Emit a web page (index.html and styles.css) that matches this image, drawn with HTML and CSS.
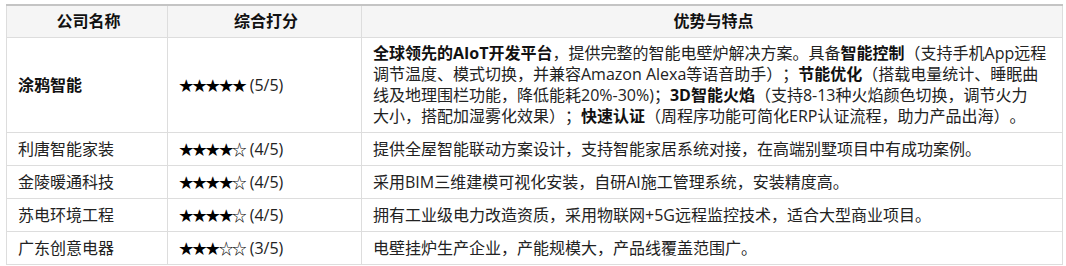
FILE: index.html
```html
<!DOCTYPE html>
<html lang="zh-CN">
<head>
<meta charset="utf-8">
<title>公司对比</title>
<link rel="stylesheet" href="styles.css">
</head>
<body>
<table class="cmp">
  <colgroup>
    <col class="c-name">
    <col class="c-score">
    <col class="c-desc">
  </colgroup>
  <thead>
    <tr><th>公司名称</th><th>综合打分</th><th>优势与特点</th></tr>
  </thead>
  <tbody>
    <tr>
      <td><strong>涂鸦智能</strong></td>
      <td><span class="stars">★★★★★</span> (5/5)</td>
      <td><strong>全球领先的AIoT开发平台</strong>，提供完整的智能电壁炉解决方案。具备<strong>智能控制</strong>（支持手机App远程调节温度、模式切换，并兼容Amazon Alexa等语音助手）；<strong>节能优化</strong>（搭载电量统计、睡眠曲线及地理围栏功能，降低能耗20%-30%)；<strong>3D智能火焰</strong>（支持8-13种火焰颜色切换，调节火力<br>大小，搭配加湿雾化效果）；<strong>快速认证</strong>（周程序功能可简化ERP认证流程，助力产品出海）。</td>
    </tr>
    <tr>
      <td>利唐智能家装</td>
      <td><span class="stars">★★★★☆</span> (4/5)</td>
      <td>提供全屋智能联动方案设计，支持智能家居系统对接，在高端别墅项目中有成功案例。</td>
    </tr>
    <tr>
      <td>金陵暖通科技</td>
      <td><span class="stars">★★★★☆</span> (4/5)</td>
      <td>采用BIM三维建模可视化安装，自研AI施工管理系统，安装精度高。</td>
    </tr>
    <tr>
      <td>苏电环境工程</td>
      <td><span class="stars">★★★★☆</span> (4/5)</td>
      <td>拥有工业级电力改造资质，采用物联网+5G远程监控技术，适合大型商业项目。</td>
    </tr>
    <tr>
      <td>广东创意电器</td>
      <td><span class="stars">★★★☆☆</span> (3/5)</td>
      <td>电壁挂炉生产企业，产能规模大，产品线覆盖范围广。</td>
    </tr>
  </tbody>
</table>
</body>
</html>
```
FILE: styles.css
```css
html, body {
  margin: 0;
  padding: 0;
  background: #fff;
}
body {
  padding: 4px 4px 0 6px;
  font-family: "Open Sans", "Noto Sans CJK SC", sans-serif;
  font-size: 16px;
  color: #222;
  text-spacing-trim: space-all;
}
.cmp {
  width: 1056px;
  border-collapse: collapse;
  table-layout: fixed;
  border-top: 2px solid #c4c4c4;
}
.c-name { width: 161px; }
.c-score { width: 194px; }
.c-desc { width: 701px; }
.cmp th, .cmp td {
  border: 1px solid #dddddd;
  padding: 5px 8px 5px 11px;
  line-height: 21px;
  vertical-align: middle;
}
.cmp thead th {
  background: #f5f5f5;
  font-weight: bold;
  text-align: center;
  color: #111;
  border-top: none;
}
.cmp td { text-align: left; }
.cmp strong { font-weight: bold; color: #111; }
.stars {
  font-family: "Noto Sans CJK SC", sans-serif;
  font-size: 14.5px;
  letter-spacing: -1.2px;
  color: #000;
}
```
